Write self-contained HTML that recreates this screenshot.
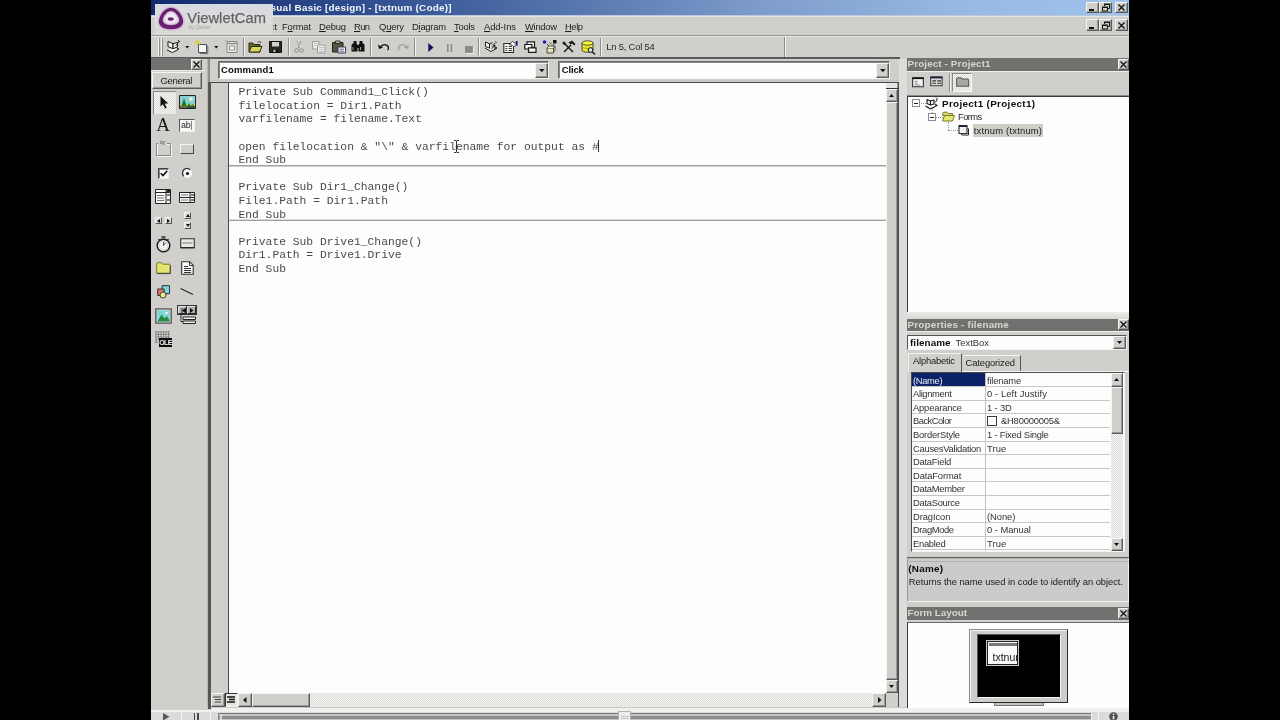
<!DOCTYPE html>
<html lang="en">
<head>
<meta charset="utf-8">
<title>Project1 - Microsoft Visual Basic [design] - [txtnum (Code)]</title>
<style>
*{box-sizing:border-box;margin:0;padding:0}
html,body{width:1280px;height:720px;overflow:hidden;background:#000}
body{position:relative;font-family:"Liberation Sans",sans-serif;font-size:9.4px;line-height:12px;color:#1c1c1c}
.a,.a>*{position:absolute}
.t{white-space:nowrap;line-height:12px;height:12px}
.b{font-weight:bold}
u{text-decoration:underline;text-underline-offset:1px}
.face{background:#d0cfcc}
.btn{background:#d0cfcc;border:1px solid;border-color:#f4f4f0 #5a5a5a #5a5a5a #f4f4f0;box-shadow:inset -1px -1px 0 #9a9a98}
.hdr{background:#717170;color:#d8d6d0;font-weight:bold;font-size:9.9px}
.sep{width:2px;border-left:1px solid #8c8c88;border-right:1px solid #f4f4f0}
.dither{background-color:#e8e8e6;background-image:conic-gradient(#f6f6f4 25%,#dcdbd8 0 50%,#f6f6f4 0 75%,#dcdbd8 0);background-size:2px 2px}
.code{font-family:"Liberation Mono",monospace;font-size:11.33px;line-height:13.6px;height:13.6px;color:#4a4a4a;white-space:pre;letter-spacing:0}
.row{left:912px;width:198px;height:13.6px;border-bottom:1px solid #c9c7c1}
.pn{color:#333}
.pv{color:#333}
svg{position:absolute;overflow:visible}
</style>
</head>
<body>
<div class="a" style="left:0;top:0;width:1280px;height:720px;overflow:hidden;background:#000;will-change:transform">
<!-- application background -->
<div class="face" style="left:151px;top:-6px;width:978px;height:732px"></div>

<!-- title bar -->
<div style="left:151px;top:-6px;width:978px;height:22px;background:linear-gradient(to right,#12296e 0%,#2d4b8c 20%,#5474ac 42%,#7d9bcb 62%,#97b8e2 82%,#9fc3ec 100%)"></div>
<div style="left:151px;top:15px;width:978px;height:2px;background:linear-gradient(#a8b8d4,#f4f4f4)"></div>
<div class="t b" style="left:159.5px;letter-spacing:0.30px;top:1.6px;font-size:9.9px;color:#f4f6fa;">Project1 - Microsoft Visual</div>
<div class="t b" style="left:294.6px;letter-spacing:0.23px;top:1.6px;font-size:9.9px;color:#f4f6fa;">Basic [design] - [txtnum (Code)]</div>
<!-- window buttons -->
<div class="btn" style="left:1086px;top:2px;width:13px;height:11px"></div>
<div style="left:1089px;top:9px;width:5px;height:2px;background:#111"></div>
<div class="btn" style="left:1099px;top:2px;width:13px;height:11px"></div>
<svg style="left:1101px;top:3px" width="9" height="9" viewBox="0 0 9 9"><path d="M3.500 1.500h5v4h-1.500M3.500 1.500v1.500" fill="none" stroke="#111" stroke-width="1"/><path d="M3 1h6" stroke="#111" stroke-width="1"/><path d="M1.500 4.500h5v3.500h-5z" fill="none" stroke="#111" stroke-width="1"/><path d="M1 4h6" stroke="#111" stroke-width="1"/></svg>
<div class="btn" style="left:1115px;top:2px;width:13px;height:11px"></div>
<svg style="left:1118px;top:4px" width="7" height="7" viewBox="0 0 7 7"><path d="M0.5 0.5l6 6M6.5 0.5l-6 6" stroke="#111" stroke-width="1.4"/></svg>

<!-- menu bar -->
<div class="t" style="left:173px;letter-spacing:-0.21px;top:20.8px"><u>F</u>ile</div>
<div class="t" style="left:197px;letter-spacing:-0.22px;top:20.8px"><u>E</u>dit</div>
<div class="t" style="left:222px;letter-spacing:-0.22px;top:20.8px"><u>V</u>iew</div>
<div class="t" style="left:249px;letter-spacing:-0.20px;top:20.8px"><u>P</u>roject</div>
<div class="t" style="left:282px;letter-spacing:-0.14px;top:20.8px">F<u>o</u>rmat</div>
<div class="t" style="left:319px;letter-spacing:-0.16px;top:20.8px"><u>D</u>ebug</div>
<div class="t" style="left:354px;letter-spacing:-0.61px;top:20.8px"><u>R</u>un</div>
<div class="t" style="left:379px;letter-spacing:-0.14px;top:20.8px">Q<u>u</u>ery</div>
<div class="t" style="left:412px;letter-spacing:-0.24px;top:20.8px">D<u>i</u>agram</div>
<div class="t" style="left:454px;letter-spacing:-0.22px;top:20.8px"><u>T</u>ools</div>
<div class="t" style="left:484px;letter-spacing:-0.05px;top:20.8px"><u>A</u>dd-Ins</div>
<div class="t" style="left:525px;letter-spacing:-0.27px;top:20.8px"><u>W</u>indow</div>
<div class="t" style="left:565px;letter-spacing:-0.43px;top:20.8px"><u>H</u>elp</div>
<!-- mdi child buttons -->
<div class="btn" style="left:1086px;top:19px;width:13px;height:12px"></div>
<div style="left:1089px;top:27px;width:5px;height:2px;background:#111"></div>
<div class="btn" style="left:1099px;top:19px;width:13px;height:12px"></div>
<svg style="left:1101px;top:21px" width="9" height="9" viewBox="0 0 9 9"><path d="M3.500 1.500h5v4h-1.500M3.500 1.500v1.500" fill="none" stroke="#111" stroke-width="1"/><path d="M3 1h6" stroke="#111" stroke-width="1"/><path d="M1.500 4.500h5v3.500h-5z" fill="none" stroke="#111" stroke-width="1"/><path d="M1 4h6" stroke="#111" stroke-width="1"/></svg>
<div class="btn" style="left:1115px;top:19px;width:13px;height:12px"></div>
<svg style="left:1118px;top:22px" width="7" height="7" viewBox="0 0 7 7"><path d="M0.5 0.5l6 6M6.5 0.5l-6 6" stroke="#111" stroke-width="1.4"/></svg>
<!-- menu/toolbar divider -->
<div style="left:151px;top:35px;width:978px;height:1px;background:#9a9894"></div>
<div style="left:151px;top:36px;width:978px;height:1px;background:#e8e6e2"></div>

<!-- toolbar -->
<div style="left:158px;top:38px;width:2px;height:18px;border-left:1px solid #f4f4f0;border-right:1px solid #8c8c88"></div>
<div style="left:161px;top:38px;width:2px;height:18px;border-left:1px solid #f4f4f0;border-right:1px solid #8c8c88"></div>
<div class="sep" style="left:243px;top:38px;height:18px"></div>
<div class="sep" style="left:288px;top:38px;height:18px"></div>
<div class="sep" style="left:370px;top:38px;height:18px"></div>
<div class="sep" style="left:414px;top:38px;height:18px"></div>
<div class="sep" style="left:478px;top:38px;height:18px"></div>
<div class="sep" style="left:600px;top:38px;height:18px"></div>
<div class="sep" style="left:784px;top:37px;height:21px"></div>
<div class="t" style="left:606.3px;letter-spacing:-0.19px;top:41px;color:#2a2a2a">Ln 5, Col 54</div>
<!-- toolbar bottom edge -->
<div style="left:151px;top:57px;width:749px;height:2px;background:#5a5a5a"></div>
<!-- toolbar icons -->
<svg style="left:166px;top:39px" width="16" height="16" viewBox="0 0 16 16"><path d="M1 11l5.500 2.500 6.500-3.500-3-1.500" fill="#f4f4f0" stroke="#1a1a1a" stroke-width="1" stroke-linejoin="round"/><path d="M2 2.500l5 2.200v5l-5-2.200z" fill="#f8f8f8" stroke="#1a1a1a" stroke-width="1" stroke-linejoin="round"/><path d="M7 4.700l4.500-1.200v4.500l-4.500 1.700z" fill="#e8e8e4" stroke="#1a1a1a" stroke-width="1" stroke-linejoin="round"/><path d="M10 6.500l3.500-4.500M12 1l2 2" stroke="#1a1a1a" stroke-width="1" fill="none"/></svg>
<svg style="left:185px;top:45.800px" width="4.500" height="2.500" viewBox="0 0 5 3"><path d="M0 0h5l-2.500 3z" fill="#111"/></svg>
<svg style="left:194px;top:39px" width="16" height="16" viewBox="0 0 16 16"><path d="M5.500 7.500l1.500 1v6h6.500l1 .800h-7.500l-1.500-1z" fill="#8a8a8a"/><path d="M4.500 5.500h8v8h-8z" fill="#f6f6f6" stroke="#3a3a4a" stroke-width=".9"/><path d="M12.500 6.500l1.300.800v7h-7.300l-1.200-.800" fill="none" stroke="#555" stroke-width=".8"/><path d="M3.500 .500v6M.500 3.500h6M1.400 1.400l4.200 4.200M5.600 1.400l-4.200 4.200" stroke="#d6d62a" stroke-width=".9"/></svg>
<svg style="left:214px;top:45.800px" width="4.500" height="2.500" viewBox="0 0 5 3"><path d="M0 0h5l-2.500 3z" fill="#111"/></svg>
<svg style="left:225px;top:40px" width="13" height="13" viewBox="0 0 13 13"><path d="M2 1.5h10v11h-10z" fill="#e4e4e0" stroke="#8a8a8a" stroke-width="1"/><path d="M2 3.5h10" stroke="#8a8a8a" stroke-width="1.4"/><path d="M4.5 6h5v4h-5z" fill="#f4f4f4" stroke="#8a8a8a" stroke-width=".9"/><path d="M0 1h1.5" stroke="#8a8a8a" stroke-width="1"/></svg>
<svg style="left:248px;top:40px" width="15" height="13" viewBox="0 0 15 13"><path d="M1 3h4l1 1.5h6v7.5h-11z" fill="#6a6a20" stroke="#2a2a10" stroke-width="1"/><path d="M1 12l2.5-5.5h10.5l-2.5 5.5z" fill="#d8d860" stroke="#2a2a10" stroke-width="1"/><path d="M9.5 2.5c1.5-1.5 3-1 3.5.5" fill="none" stroke="#222" stroke-width=".9"/></svg>
<svg style="left:269px;top:41px" width="13" height="12" viewBox="0 0 13 12"><path d="M.5.5h12v11h-12z" fill="#2c2c24" stroke="#111" stroke-width="1"/><path d="M3 1h7v4.5h-7z" fill="#d0d0cc"/><path d="M3.5 8h6v3.500h-6z" fill="#111"/><path d="M4.500 8.600h2v2.400h-2z" fill="#c8c8c4"/></svg>
<svg style="left:294px;top:41px" width="10" height="12" viewBox="0 0 10 12"><path d="M3 0l3 7.500M7 0l-3 7.500" stroke="#8c8c8c" stroke-width="1" fill="none"/><circle cx="2.500" cy="9.500" r="1.800" fill="none" stroke="#8c8c8c" stroke-width="1"/><circle cx="7.500" cy="9.500" r="1.800" fill="none" stroke="#8c8c8c" stroke-width="1"/><path d="M3.800 .500l3 7.500" stroke="#f4f4f4" stroke-width=".6"/></svg>
<svg style="left:312px;top:40.500px" width="15" height="13" viewBox="0 0 15 13"><path d="M.500.500h6.500v7.500h-6.500z" fill="#ecece8" stroke="#9a9a98" stroke-width="1"/><path d="M5.500 4h7.500v8h-7.500z" fill="#f0f0ec" stroke="#9a9a98" stroke-width="1"/><path d="M2 2.500h3.500M2 4.500h2M7 6.500h4.500M7 8.500h4.500M7 10.500h4.500" stroke="#b0b0ac" stroke-width=".8"/></svg>
<svg style="left:332px;top:40px" width="14" height="14" viewBox="0 0 14 14"><path d="M.500 2.500h10.500v9.500h-10.500z" fill="#56563c" stroke="#22221a" stroke-width="1"/><path d="M3.500 1h4.500v2.500h-4.500z" fill="#b4b4ac" stroke="#22221a" stroke-width=".9"/><path d="M6 7h7.500v6h-7.500z" fill="#f4f4f4" stroke="#3a3a5a" stroke-width="1"/><path d="M7.500 9.200h4.500M7.500 11.200h4.500" stroke="#55557a" stroke-width=".9"/></svg>
<svg style="left:351px;top:40px" width="14" height="13" viewBox="0 0 14 13"><path d="M2.500 1h3v4h-3zM8.500 1h3v4h-3z" fill="#111"/><path d="M.500 5.500c0-1.500 1-2 2.500-2h2c1 0 1.500.800 1.500 2v6h-6zM7.500 5.500c0-1.500 1-2 2.500-2h2c1 0 1.500.800 1.500 2v6h-6z" fill="#111"/><path d="M5.500 5h3v3h-3z" fill="#111"/><path d="M2 7v3M9.500 7v3" stroke="#bbb" stroke-width=".9"/></svg>
<svg style="left:377.500px;top:42.500px" width="12" height="8" viewBox="0 0 12 8"><path d="M3 3.500c2.500-3 7.500-2 7.500 1.500 0 .800-.400 1.600-1 2.200" fill="none" stroke="#111" stroke-width="1.200"/><path d="M0 1.500l1 4.500 4-1.500z" fill="#111"/></svg>
<svg style="left:397px;top:42.500px" width="12" height="8" viewBox="0 0 12 8"><path d="M9 3.500c-2.500-3-7.500-2-7.500 1.500 0 .800.400 1.600 1 2.200" fill="none" stroke="#a0a09c" stroke-width="1.200"/><path d="M12 1.500l-1 4.500-4-1.500z" fill="#a0a09c"/></svg>
<svg style="left:428px;top:42.500px" width="6" height="9" viewBox="0 0 6 9"><path d="M.300 0l5.200 4.500-5.200 4.500z" fill="#101060"/></svg>
<svg style="left:446px;top:44px" width="7" height="8" viewBox="0 0 7 8"><path d="M1 0h1.600v8h-1.600zM4.600 0h1.600v8h-1.600z" fill="#8a8a8a"/></svg>
<div style="left:465px;top:46px;width:8px;height:7px;background:#8c8c8c;box-shadow:1px 1px 0 #f0f0ec"></div>
<svg style="left:484px;top:40px" width="14" height="14" viewBox="0 0 14 14"><path d="M1 8l6 3.500 6-3.500-2.500-1.500" fill="#f4f4f0" stroke="#1a1a1a" stroke-width="1" stroke-linejoin="round"/><path d="M1.500 2l4 1.800v4.400l-4-1.800z" fill="#f8f8f8" stroke="#1a1a1a" stroke-width="1" stroke-linejoin="round"/><path d="M5.500 3.800l3-1M7.500 9l3.500-6M9 4.500l3 4M11.500 1.500l1 1.500M9.500 7.500l2 1.500" stroke="#1a1a1a" stroke-width=".9" fill="none"/><circle cx="10.500" cy="6" r=".900" fill="#1a1a1a"/></svg>
<svg style="left:503px;top:40px" width="15" height="14" viewBox="0 0 15 14"><path d="M.800 3.500h9.700v9h-9.700z" fill="#f6f6f4" stroke="#2a2a2a" stroke-width="1.100"/><path d="M2.300 6.500h2M5.500 6.500h3.500M2.300 8.500h2M5.500 8.500h3.500M2.300 10.500h2M5.500 10.500h3.500" stroke="#333" stroke-width=".9"/><path d="M6 4.500l3.500-3 2 1.300 1.500-.800v3.500l-2.500 1.200-1.500-1.500z" fill="#f4f4f0" stroke="#2a2a2a" stroke-width=".9" stroke-linejoin="round"/><path d="M13 1h1.600v4.500h-1.600z" fill="#1a1a7a"/></svg>
<svg style="left:524px;top:41px" width="13" height="12" viewBox="0 0 13 12"><path d="M3 .800h7.500v5.500h-7.500z" fill="#f4f4f4" stroke="#1a1a1a" stroke-width="1.200"/><path d="M.800 3.500h7v4.500h-7z" fill="#f4f4f4" stroke="#1a1a1a" stroke-width="1.200"/><path d="M4.500 6.800h7.500v4.500h-7.500z" fill="#f4f4f4" stroke="#1a1a1a" stroke-width="1.200"/></svg>
<svg style="left:542px;top:39px" width="15" height="15" viewBox="0 0 15 15"><circle cx="2.500" cy="3" r="1.800" fill="#2222aa"/><path d="M11 1h3.500v3.500h-3.500z" fill="#111"/><path d="M7.500 3.500l2 1.500M5 5l3 3M12 5l-2 3" stroke="#333" stroke-width=".9"/><path d="M5 9h6.500v5h-6.500z" fill="#e4e4a8" stroke="#444" stroke-width="1"/><path d="M5 9l1.500-2h6.500l-1.500 2M13 7v4.500l-1.500 2" fill="#f4f4d0" stroke="#444" stroke-width=".9"/></svg>
<svg style="left:562px;top:40px" width="14" height="13" viewBox="0 0 14 13"><path d="M2.500 3.500l8.500 8.500" stroke="#1a1a1a" stroke-width="1.500"/><path d="M1 1.500l2 .500 1 2-1.500 1-2-1z" fill="#1a1a1a"/><path d="M2 12l7-7" stroke="#1a1a1a" stroke-width="1.400"/><path d="M6.500 2.500l3.500-2 3.500 3.500-1.200 1.500-2.300-2-1.500 1z" fill="#1a1a1a"/></svg>
<svg style="left:581px;top:40px" width="15" height="15" viewBox="0 0 15 15"><path d="M1 3v7c0 3 11 3 11 0v-7" fill="#ecec28" stroke="#444" stroke-width="1"/><ellipse cx="6.500" cy="3" rx="5.500" ry="2.200" fill="#f4f440" stroke="#444" stroke-width="1"/><path d="M1 6.500c0 2.500 11 2.500 11 0" fill="none" stroke="#8a8a20" stroke-width=".8"/><circle cx="9.500" cy="10" r="2.300" fill="#e8e8e0" stroke="#111" stroke-width="1"/><path d="M11.200 11.800l2.800 2.700" stroke="#111" stroke-width="1.500"/></svg>
<!-- toolbox -->
<div class="hdr" style="left:151px;top:57.500px;width:41px;height:12px"></div>
<div class="btn" style="left:191px;top:58.500px;width:11px;height:11px"></div>
<svg style="left:193px;top:60.500px" width="7" height="7" viewBox="0 0 7 7"><path d="M0.500 0.500l6 6M6.500 0.500l-6 6" stroke="#111" stroke-width="1.300"/></svg>
<div style="left:151px;top:70px;width:54px;height:1px;background:#ecebe7"></div>
<div class="btn" style="left:152px;top:72px;width:50px;height:17px"></div>
<div class="t" style="left:160.5px;letter-spacing:-0.36px;top:74.6px;font-size:9.6px">General</div>
<!-- toolbox / code window divider -->
<div style="left:208px;top:59px;width:1.500px;height:23px;background:#8e8e8c"></div><div style="left:208px;top:82px;width:3px;height:627px;background:#555554"></div>
<div style="left:207px;top:59px;width:1px;height:648px;background:#b8b6b0"></div>

<!-- pointer (selected) -->
<div class="dither" style="left:153px;top:91px;width:23px;height:23px;border-left:1px solid #8c8c8c;border-top:1px solid #8c8c8c"></div>
<svg style="left:160px;top:96px" width="9" height="13" viewBox="0 0 9 13"><path d="M.500 0v10.500l2.500-2.300 2 4.300 1.700-.8-2-4.200h3.500z" fill="#111"/></svg>
<!-- picturebox -->
<svg style="left:179px;top:95px" width="17" height="14" viewBox="0 0 17 14"><path d="M.500.500h16v13h-16z" fill="#8ad0d8" stroke="#222" stroke-width="1"/><path d="M1 9h15v4h-15z" fill="#c8c060"/><path d="M2.500 11l2.500-8 2.500 8z" fill="#1c7a30"/><circle cx="12" cy="4" r="1.800" fill="#f4f4c0"/><path d="M8 11l2-3 2 3 1.500-2 2 2.500v1.500h-7.500z" fill="#2a8a3a"/><path d="M1 12h15" stroke="#333" stroke-width="1.200"/></svg>
<!-- label A -->
<div class="t" style="left:154px;top:115px;width:18px;height:20px;line-height:20px;text-align:center;font-family:'Liberation Serif',serif;font-size:19px;color:#1a1a1a">A</div>
<!-- textbox -->
<div style="left:179px;top:119px;width:16px;height:13px;background:#f8f8f8;border:1px solid;border-color:#555 #eee #eee #555"></div>
<div class="t" style="left:181px;top:119px;font-size:9px;color:#222;letter-spacing:-.3px">ab<span style="color:#555">|</span></div>
<!-- frame -->
<div style="left:156px;top:143px;width:15px;height:13px;border:1px solid #8a8a8a;box-shadow:1px 1px 0 #f4f4f4, inset 1px 1px 0 #f4f4f4"></div>
<div class="t" style="left:158px;top:139px;width:9px;height:6px;line-height:6px;font-size:5px;background:#d0cfcc;color:#333;text-align:center">xy</div>
<!-- command button -->
<div style="left:180px;top:144px;width:14px;height:10px;background:#d0cfcc;border:1px solid;border-color:#f6f6f6 #444 #444 #f6f6f6"></div>
<!-- checkbox -->
<div style="left:158px;top:168px;width:11px;height:11px;background:#f8f8f8;border:1px solid;border-color:#444 #eee #eee #444;box-shadow:inset 1px 1px 0 #888"></div>
<svg style="left:160px;top:170px" width="8" height="7" viewBox="0 0 8 7"><path d="M.700 3.200l2.300 2.300 4.300-4.800" fill="none" stroke="#111" stroke-width="1.600"/></svg>
<!-- option button -->
<svg style="left:182px;top:168px" width="11" height="11" viewBox="0 0 11 11"><circle cx="5.500" cy="5.500" r="4.500" fill="#f8f8f8"/><path d="M1.800 8.200a4.500 4.500 0 0 1 6.400-6.400" fill="none" stroke="#333" stroke-width="1.300"/><circle cx="5.500" cy="5.500" r="1.600" fill="#111"/></svg>
<!-- combobox -->
<svg style="left:155px;top:189px" width="16" height="15" viewBox="0 0 16 15"><path d="M.500.500h15v14h-15z" fill="#f8f8f8" stroke="#222" stroke-width="1"/><path d="M.500 3.500h15M11 .500v14" stroke="#222" stroke-width="1"/><path d="M11.500 1h4v2.500h-4z" fill="#222"/><path d="M12 6h3M12 11h3" stroke="#555" stroke-width="1.600"/><path d="M2 6.500h7M2 9h7M2 11.500h7" stroke="#666" stroke-width=".9"/></svg>
<!-- listbox -->
<svg style="left:179px;top:192px" width="16" height="11" viewBox="0 0 16 11"><path d="M.500.500h15v10h-15z" fill="#f8f8f8" stroke="#222" stroke-width="1"/><path d="M11 .500v10M.500 5.500h15" stroke="#222" stroke-width="1"/><path d="M12 3h3M12 8h3" stroke="#555" stroke-width="1.600"/><path d="M2 3h7M2 8h7" stroke="#666" stroke-width=".9"/></svg>
<!-- hscroll -->
<div style="left:155px;top:217px;width:7px;height:7px;background:#dcdcd8;border:1px solid;border-color:#f4f4f4 #555 #555 #f4f4f4"></div>
<svg style="left:157px;top:219px" width="3" height="4" viewBox="0 0 3 4"><path d="M3 0v4l-3-2z" fill="#111"/></svg>
<div style="left:165px;top:217px;width:7px;height:7px;background:#dcdcd8;border:1px solid;border-color:#f4f4f4 #555 #555 #f4f4f4"></div>
<svg style="left:167px;top:219px" width="3" height="4" viewBox="0 0 3 4"><path d="M0 0v4l3-2z" fill="#111"/></svg>
<!-- vscroll -->
<div style="left:184px;top:212px;width:7px;height:7px;background:#dcdcd8;border:1px solid;border-color:#f4f4f4 #555 #555 #f4f4f4"></div>
<svg style="left:185.500px;top:214px" width="4" height="3" viewBox="0 0 4 3"><path d="M0 3h4l-2-3z" fill="#111"/></svg>
<div style="left:184px;top:222px;width:7px;height:7px;background:#dcdcd8;border:1px solid;border-color:#f4f4f4 #555 #555 #f4f4f4"></div>
<svg style="left:185.500px;top:224px" width="4" height="3" viewBox="0 0 4 3"><path d="M0 0h4l-2 3z" fill="#111"/></svg>
<!-- timer -->
<svg style="left:156px;top:235px" width="15" height="18" viewBox="0 0 15 18"><circle cx="7.500" cy="10.500" r="6.300" fill="#f4f4f4" stroke="#1a1a1a" stroke-width="1.500"/><path d="M5.500 1h4v2.500h-4z" fill="#555"/><path d="M7.500 10.500l2.500-3M7.500 10.500v-4" stroke="#444" stroke-width=".9"/><path d="M2.500 4l1.500 1.500M12.500 4l-1.500 1.500" stroke="#222" stroke-width="1.200"/><circle cx="7.500" cy="10.500" r="4.300" fill="none" stroke="#999" stroke-width=".8" stroke-dasharray="1 1.200"/></svg>
<!-- drive list -->
<svg style="left:180px;top:238px" width="15" height="11" viewBox="0 0 15 11"><path d="M.700.700h13.600v9h-13.600z" fill="#e8e8e4" stroke="#333" stroke-width="1.100"/><path d="M2.500 5h10" stroke="#777" stroke-width="1"/><path d="M1 9.700h13.500" stroke="#222" stroke-width="1.200"/></svg>
<!-- dir list -->
<svg style="left:156px;top:262px" width="15" height="13" viewBox="0 0 15 13"><path d="M.700 2c0-.8.500-1.300 1.300-1.300h3.500l1.200 1.500h6.500c.700 0 1.100.500 1.100 1.200v7.800h-13.600z" fill="#e4e470" stroke="#77772a" stroke-width="1"/><path d="M1 11.600h13.500M14.300 3.500v8" stroke="#444" stroke-width="1"/></svg>
<!-- file list -->
<svg style="left:181px;top:261px" width="13" height="14" viewBox="0 0 13 14"><path d="M.700.700h8l3.500 3.500v9h-11.500z" fill="#f8f8f8" stroke="#333" stroke-width="1.100"/><path d="M8.500.700v3.800h3.700" fill="none" stroke="#333" stroke-width="1"/><path d="M3 5.500h4M3 7.500h7M3 9.500h7M3 11.500h7" stroke="#333" stroke-width="1"/></svg>
<!-- shape -->
<svg style="left:157px;top:285px" width="14" height="14" viewBox="0 0 14 14"><path d="M5 .700h7.500v8h-7.500z" fill="#78d8e0" stroke="#333" stroke-width="1"/><path d="M.700 4h6.500v6.500h-6.500z" fill="#e07868" stroke="#333" stroke-width="1"/><circle cx="6" cy="10" r="3" fill="#f0e878" stroke="#444" stroke-width="1"/></svg>
<!-- line -->
<svg style="left:180px;top:287px" width="14" height="9" viewBox="0 0 14 9"><path d="M.500 1.500l12.500 6" stroke="#222" stroke-width="1.100"/></svg>
<!-- image -->
<svg style="left:155px;top:308px" width="17" height="16" viewBox="0 0 17 16"><path d="M.800.800h15.400v14.400h-15.400z" fill="#d0d0cc" stroke="#555" stroke-width="1.300"/><path d="M2.500 2.500h12v11h-12z" fill="#7ad8d8"/><path d="M2.500 13.500l4-7 3 4 2-2.500 3 4v1.500z" fill="#2a8a44"/><circle cx="11.500" cy="5" r="1.300" fill="#f8f8f8"/></svg>
<!-- data -->
<div style="left:178px;top:306px;width:9px;height:8px;background:#bcbcba;border:1px solid;border-color:#e4e4e4 #222 #222 #e4e4e4;outline:1px solid #333"></div>
<svg style="left:180.500px;top:308px" width="5" height="5" viewBox="0 0 5 5"><path d="M1 0v5M5 0v5l-3.500-2.500z" stroke="#111" stroke-width=".8" fill="#111"/></svg>
<div style="left:187px;top:306px;width:9px;height:8px;background:#b0b0ae;border:1px solid;border-color:#e4e4e4 #222 #222 #e4e4e4;outline:1px solid #333"></div>
<svg style="left:189.500px;top:308px" width="5" height="5" viewBox="0 0 5 5"><path d="M0 0v5l3.500-2.500z" fill="#111"/></svg>
<svg style="left:180px;top:315px" width="16" height="10" viewBox="0 0 16 10"><path d="M1 0v6.500h2M3 2h12.500v2.500h-12.500zM3 6h12.500v2.500h-12.500z" fill="#f4f4f4" stroke="#222" stroke-width="1"/></svg>
<!-- OLE -->
<svg style="left:155px;top:331px" width="15" height="13" viewBox="0 0 15 13"><path d="M.500 1h14.500M.500 3.500h14.500M.500 6h14.500M1 .500v12M3.500 .500v7M6 .500v7M8.500 .500v7M11 .500v7M13.500 .500v7M.500 8.500h4M.500 11h4" stroke="#3a3a3a" stroke-width=".8" stroke-dasharray="1 1"/></svg>
<div class="t b" style="left:159px;top:338px;width:13px;height:9px;line-height:9px;background:#0a0a0a;color:#f4f4f4;font-size:7px;text-align:center;letter-spacing:-.6px;overflow:hidden">OLE</div>
<!-- code window frame -->
<div style="left:211px;top:59px;width:689px;height:2px;background:#d0cfcc"></div>
<div style="left:899px;top:59px;width:7.500px;height:649.500px;background:#dcdcda"></div>

<!-- object combo -->
<div style="left:218px;top:61px;width:331px;height:18px;background:#fdfdfd;border:1px solid;border-color:#666 #f4f4f0 #f4f4f0 #666;box-shadow:inset 1px 1px 0 #8a8a8a"></div>
<div class="t b" style="left:221px;letter-spacing:0.15px;top:64.2px;font-size:9.5px;color:#0c0c0c">Command1</div>
<div class="btn" style="left:535px;top:63px;width:13px;height:15px"></div>
<svg style="left:538.7px;top:68.8px" width="5.600" height="3.400" viewBox="0 0 7 4"><path d="M0 0h7l-3.500 4z" fill="#111"/></svg>
<!-- proc combo -->
<div style="left:558px;top:61px;width:332px;height:18px;background:#fdfdfd;border:1px solid;border-color:#666 #f4f4f0 #f4f4f0 #666;box-shadow:inset 1px 1px 0 #8a8a8a"></div>
<div class="t b" style="left:561.8px;letter-spacing:-0.18px;top:64.2px;font-size:9.5px;color:#0c0c0c">Click</div>
<div class="btn" style="left:876px;top:63px;width:13px;height:15px"></div>
<svg style="left:879.7px;top:68.8px" width="5.600" height="3.400" viewBox="0 0 7 4"><path d="M0 0h7l-3.500 4z" fill="#111"/></svg>
<!-- code area -->
<div style="left:211px;top:80px;width:688px;height:1px;background:#c4c4c2"></div>
<div style="left:211px;top:81.600px;width:688px;height:1px;background:#484848"></div>
<div style="left:211px;top:82.500px;width:18px;height:610.500px;background:#d0cfcc"></div>
<div style="left:228px;top:82.500px;width:1px;height:610.500px;background:#484848"></div>
<div style="left:229px;top:82.500px;width:656.500px;height:610.500px;background:#fdfdfd"></div>
<div style="left:229px;top:165px;width:656.500px;height:1px;background:#a0a0a0;box-shadow:0 1px 0 #cfcfcf"></div>
<div style="left:229px;top:220px;width:656.500px;height:1px;background:#a0a0a0;box-shadow:0 -1px 0 #dcdcdc"></div>
<div class="code" style="left:238.4px;top:86.1px">Private Sub Command1_Click()</div>
<div class="code" style="left:238.4px;top:99.7px">filelocation = Dir1.Path</div>
<div class="code" style="left:238.4px;top:113.3px">varfilename = filename.Text</div>
<div class="code" style="left:238.4px;top:140.5px">open filelocation &amp; "\" &amp; varfilename for output as #</div>
<div class="code" style="left:238.4px;top:154.1px">End Sub</div>
<div class="code" style="left:238.4px;top:181.3px">Private Sub Dir1_Change()</div>
<div class="code" style="left:238.4px;top:194.9px">File1.Path = Dir1.Path</div>
<div class="code" style="left:238.4px;top:208.5px">End Sub</div>
<div class="code" style="left:238.4px;top:235.7px">Private Sub Drive1_Change()</div>
<div class="code" style="left:238.4px;top:249.3px">Dir1.Path = Drive1.Drive</div>
<div class="code" style="left:238.4px;top:262.9px">End Sub</div>
<!-- caret + I-beam -->
<div style="left:598px;top:140px;width:1px;height:12px;background:#333"></div>
<svg style="left:453px;top:140px" width="7" height="13" viewBox="0 0 7 13"><path d="M1 .500h2l.500.500.500-.500h2M3.500 1v11M1 12.500h2l.500-.500.500.500h2M2.500 7h2" fill="none" stroke="#333" stroke-width="1"/></svg>
<!-- vertical scrollbar -->
<div class="dither" style="left:885.500px;top:82.500px;width:12.500px;height:610.500px"></div>
<div style="left:898px;top:82px;width:1px;height:625px;background:#4a4a4a"></div>
<div style="left:885.500px;top:83px;width:12.500px;height:5px;background:#e6e6e4;border-right:1px solid #999"></div>
<div style="left:885.500px;top:88px;width:12.500px;height:1px;background:#333"></div>
<div class="btn" style="left:885.500px;top:89px;width:12.500px;height:12.500px"></div>
<svg style="left:889.0px;top:93.8px" width="5" height="3" viewBox="0 0 6 3.500"><path d="M0 3.500h6l-3-3.500z" fill="#111"/></svg>
<div class="btn" style="left:885.500px;top:101.500px;width:12.500px;height:578px"></div>
<div class="btn" style="left:885.500px;top:679.500px;width:12.500px;height:13.500px"></div>
<svg style="left:889.0px;top:685.3px" width="5" height="3" viewBox="0 0 6 3.500"><path d="M0 0h6l-3 3.500z" fill="#111"/></svg>
<!-- horizontal scrollbar -->
<div class="dither" style="left:211px;top:693px;width:674.500px;height:14px"></div>
<div class="btn" style="left:211px;top:693px;width:13.500px;height:14px"></div>
<svg style="left:213px;top:696px" width="9" height="8" viewBox="0 0 9 8"><path d="M0 1h8M2 3.500h6M2 6h6" stroke="#444" stroke-width="1"/></svg>
<div style="left:224.500px;top:693px;width:13.500px;height:14px;background:#e8e6e2;border:1px solid;border-color:#333 #f4f4f0 #f4f4f0 #333"></div>
<svg style="left:227px;top:696px" width="9" height="8" viewBox="0 0 9 8"><path d="M0 1h8M2 3.500h6M0 6h8" stroke="#111" stroke-width="1.300"/></svg>
<div class="btn" style="left:238px;top:693px;width:13.500px;height:14px"></div>
<svg style="left:242.500px;top:697px" width="3.500" height="6" viewBox="0 0 3.500 6"><path d="M3.500 0v6l-3.500-3z" fill="#111"/></svg>
<div class="btn" style="left:251.500px;top:693px;width:58px;height:14px"></div>
<div class="btn" style="left:872px;top:693px;width:13.500px;height:14px"></div>
<svg style="left:877.500px;top:697px" width="3.500" height="6" viewBox="0 0 3.500 6"><path d="M0 0v6l3.500-3z" fill="#111"/></svg>
<div class="face" style="left:885.500px;top:693px;width:12.500px;height:14px"></div>
<!-- project explorer -->
<div class="hdr" style="left:906.500px;top:58px;width:222.500px;height:12.500px"></div>
<div class="t hdr" style="left:907.5px;letter-spacing:0.11px;top:58.3px;background:none">Project - Project1</div>
<div class="btn" style="left:1117.500px;top:58.500px;width:11px;height:11px"></div>
<svg style="left:1120px;top:60.500px" width="7" height="7" viewBox="0 0 7 7"><path d="M0.500 0.500l6 6M6.500 0.500l-6 6" stroke="#111" stroke-width="1.300"/></svg>
<div style="left:906.500px;top:70.500px;width:222.500px;height:1px;background:#f0efeb"></div>
<svg style="left:912px;top:76.500px" width="12" height="10.500" viewBox="0 0 13 11"><path d="M.700.700h11.600v9.600h-11.600z" fill="#f4f4f4" stroke="#333" stroke-width="1.200"/><path d="M.500 1.200h12" stroke="#111" stroke-width="1.800"/><path d="M3 4.500h3M3 6.500h3M3 8.500h6" stroke="#777" stroke-width=".9"/></svg>
<svg style="left:930.300px;top:76.300px" width="12.800" height="10.800" viewBox="0 0 14 11"><path d="M.700.700h12.600v9.600h-12.600z" fill="#d8d8d4" stroke="#444" stroke-width="1.200"/><path d="M.500 1.200h13" stroke="#1a1a3a" stroke-width="2"/><path d="M2.500 5h4M8 5h4M2.500 7.500h4M8 7.500h4" stroke="#333" stroke-width="1.300"/></svg>
<div class="sep" style="left:949px;top:73px;height:19px"></div>
<div class="dither" style="left:952px;top:73px;width:20px;height:19px;border:1px solid;border-color:#8a8a8a #f8f8f8 #f8f8f8 #8a8a8a"></div>
<svg style="left:956px;top:77px" width="13" height="10.300" viewBox="0 0 14 11"><path d="M.700 2c0-.800.500-1.300 1.300-1.300h3.200l1.300 1.500h6c.700 0 1.100.500 1.100 1.200v6.600h-12.900z" fill="#a8a8a4" stroke="#555" stroke-width="1.100"/></svg>
<div style="left:906.500px;top:94.500px;width:222.500px;height:1px;background:#8a8a8a"></div>
<div style="left:906.500px;top:95.500px;width:222.500px;height:216px;background:#fdfdfd;border-left:1.500px solid #3a3a3a;border-top:1px solid #3a3a3a"></div>
<div style="left:906.500px;top:311.500px;width:222.500px;height:7px;background:linear-gradient(#ecece9,#d6d6d3)"></div>
<!-- tree -->
<div style="left:918px;top:103px;width:8px;height:0;border-top:1px dotted #9a9a9a"></div>
<div style="left:931.500px;top:108px;width:0;height:9px;border-left:1px dotted #9a9a9a"></div>
<div style="left:935px;top:117px;width:8px;height:0;border-top:1px dotted #9a9a9a"></div>
<div style="left:947.500px;top:122px;width:0;height:8px;border-left:1px dotted #9a9a9a"></div>
<div style="left:947.500px;top:130px;width:10px;height:0;border-top:1px dotted #9a9a9a"></div>
<div style="left:912px;top:99px;width:8px;height:8px;background:#fdfdfd;border:1px solid #8c8c8c"></div>
<div style="left:914px;top:102.500px;width:4px;height:1px;background:#222"></div>
<div style="left:928px;top:113px;width:8px;height:8px;background:#fdfdfd;border:1px solid #8c8c8c"></div>
<div style="left:930px;top:116.500px;width:4px;height:1px;background:#222"></div>
<svg style="left:925px;top:97px" width="14" height="13" viewBox="0 0 14 13"><path d="M2 2.500l3.500 1.500v4l-3.500-1.500zM5.500 4l3.500-1v4l-3.500 1M.500 9l5 3 6.500-3.500-2-1.500" fill="#f4f4f0" stroke="#1a1a1a" stroke-width="1.100" stroke-linejoin="round"/><path d="M9.500 5.500c1.500-.500 2.500-2 2.500-3.500M11 .500l1.500 1.500" stroke="#1a1a1a" stroke-width="1" fill="none"/></svg>
<div class="t b" style="left:942px;letter-spacing:0.32px;top:97.5px;font-size:9.9px;color:#0c0c0c">Project1 (Project1)</div>
<svg style="left:942px;top:111px" width="13" height="11" viewBox="0 0 13 11"><path d="M.700 2.500c0-.800.500-1.300 1.300-1.300h3l1.200 1.300h4.300v2h-9.800z" fill="#dcdc70" stroke="#77772a" stroke-width="1"/><path d="M.700 10l1.800-5.500h10l-2 5.500z" fill="#e8e878" stroke="#77772a" stroke-width="1"/></svg>
<div class="t" style="left:958px;letter-spacing:-0.57px;top:111px;color:#2a2a2a">Forms</div>
<svg style="left:958px;top:124px" width="12" height="12" viewBox="0 0 12 12"><path d="M1 1.500h8v8h-8z" fill="#f4f4f4" stroke="#2a3a3a" stroke-width="1.200"/><path d="M1 2h8" stroke="#1a2a3a" stroke-width="2"/><path d="M9.500 4l1 1v6h-6.500l-1-1" fill="none" stroke="#222" stroke-width="1"/></svg>
<div style="left:973px;top:124px;width:70px;height:13px;background:#cfcdc8"></div>
<div class="t" style="left:973.8px;letter-spacing:0.22px;top:124.5px;color:#1a1a1a">txtnum (txtnum)</div>

<!-- properties window -->
<div class="hdr" style="left:906.500px;top:318.500px;width:222.500px;height:12.500px"></div>
<div class="t hdr" style="left:907.5px;letter-spacing:0.18px;top:318.8px;background:none">Properties - filename</div>
<div class="btn" style="left:1117.500px;top:319px;width:11px;height:11px"></div>
<svg style="left:1120px;top:321px" width="7" height="7" viewBox="0 0 7 7"><path d="M0.500 0.500l6 6M6.500 0.500l-6 6" stroke="#111" stroke-width="1.300"/></svg>
<div style="left:906.500px;top:331px;width:222.500px;height:1px;background:#f0efeb"></div>
<div style="left:906.500px;top:334.500px;width:220px;height:15.500px;background:#fdfdfd;border:1px solid;border-color:#555 #f4f4f0 #f4f4f0 #555"></div>
<div class="t b" style="left:910px;letter-spacing:0.07px;top:336.5px;font-size:9.9px;color:#0c0c0c">filename</div><div class="t" style="left:955.6px;letter-spacing:0.01px;top:336.5px;color:#333">TextBox</div>
<div class="btn" style="left:1113px;top:336px;width:12.500px;height:13px"></div>
<svg style="left:1117.0px;top:341.3px" width="5" height="3" viewBox="0 0 6 3.500"><path d="M0 0h6l-3 3.500z" fill="#111"/></svg>
<!-- tabs -->
<div style="left:908px;top:352.500px;width:54px;height:19px;background:#d0cfcc;border-left:1px solid #f4f4f0;border-top:1px solid #f4f4f0;border-right:1.500px solid #555"></div>
<div class="t" style="left:913px;letter-spacing:-0.20px;top:355px;color:#1a1a1a">Alphabetic</div>
<div style="left:962.500px;top:354.500px;width:58px;height:16px;background:#d0cfcc;border-top:1px solid #f4f4f0;border-right:1.500px solid #555"></div>
<div class="t" style="left:965.6px;letter-spacing:-0.12px;top:356.5px;color:#1a1a1a">Categorized</div>
<div style="left:962px;top:370.500px;width:167px;height:1px;background:#f4f4f0"></div>
<!-- grid -->
<div style="left:910.500px;top:372px;width:214px;height:180px;background:#fdfdfd;border:1px solid;border-color:#4a4a4a #f4f4f0 #f4f4f0 #4a4a4a"></div>
<div style="left:984.500px;top:373px;width:1px;height:178px;background:#c4c2bc"></div>
<div style="left:912px;top:373px;width:72.500px;height:13.500px;background:#0c2268"></div>
<div class="row" style="top:373.6px"></div>
<div class="row" style="top:387.2px"></div>
<div class="row" style="top:400.8px"></div>
<div class="row" style="top:414.4px"></div>
<div class="row" style="top:428.0px"></div>
<div class="row" style="top:441.6px"></div>
<div class="row" style="top:455.2px"></div>
<div class="row" style="top:468.8px"></div>
<div class="row" style="top:482.4px"></div>
<div class="row" style="top:496.0px"></div>
<div class="row" style="top:509.6px"></div>
<div class="row" style="top:523.2px"></div>
<div class="row" style="top:536.8px"></div>
<div class="t pn" style="left:913px;letter-spacing:-0.35px;top:374.5px;color:#f0f0f4">(Name)</div><div class="t pv" style="left:987px;letter-spacing:-0.18px;top:374.5px">filename</div>
<div class="t pn" style="left:913px;letter-spacing:-0.35px;top:388.1px">Alignment</div><div class="t pv" style="left:987px;letter-spacing:0.10px;top:388.1px">0 - Left Justify</div>
<div class="t pn" style="left:913px;letter-spacing:-0.18px;top:401.7px">Appearance</div><div class="t pv" style="left:987px;letter-spacing:-0.13px;top:401.7px">1 - 3D</div>
<div class="t pn" style="left:913px;letter-spacing:-0.54px;top:415.3px">BackColor</div><div class="t pv" style="left:1001px;letter-spacing:-0.20px;top:415.3px">&amp;H80000005&amp;</div>
<div style="left:987px;top:415.500px;width:10px;height:10px;background:#fdfdfd;border:1px solid #3a3a3a"></div>
<div class="t pn" style="left:913px;letter-spacing:-0.20px;top:428.9px">BorderStyle</div><div class="t pv" style="left:987px;letter-spacing:-0.22px;top:428.9px">1 - Fixed Single</div>
<div class="t pn" style="left:913px;letter-spacing:-0.27px;top:442.5px">CausesValidation</div><div class="t pv" style="left:987px;letter-spacing:0.12px;top:442.5px">True</div>
<div class="t pn" style="left:913px;letter-spacing:-0.24px;top:456.1px">DataField</div>
<div class="t pn" style="left:913px;letter-spacing:-0.14px;top:469.7px">DataFormat</div>
<div class="t pn" style="left:913px;letter-spacing:-0.27px;top:483.3px">DataMember</div>
<div class="t pn" style="left:913px;letter-spacing:-0.28px;top:496.9px">DataSource</div>
<div class="t pn" style="left:913px;letter-spacing:-0.09px;top:510.5px">DragIcon</div><div class="t pv" style="left:987px;letter-spacing:-0.05px;top:510.5px">(None)</div>
<div class="t pn" style="left:913px;letter-spacing:-0.40px;top:524.1px">DragMode</div><div class="t pv" style="left:987px;letter-spacing:-0.04px;top:524.1px">0 - Manual</div>
<div class="t pn" style="left:913px;letter-spacing:-0.28px;top:537.7px">Enabled</div><div class="t pv" style="left:987px;letter-spacing:0.12px;top:537.7px">True</div>
<!-- grid scrollbar -->
<div class="dither" style="left:1110.500px;top:373px;width:12.500px;height:178px"></div>
<div class="btn" style="left:1110.500px;top:373px;width:12.500px;height:13.500px"></div>
<svg style="left:1114.0px;top:378.3px" width="5" height="3" viewBox="0 0 6 3.500"><path d="M0 3.500h6l-3-3.500z" fill="#111"/></svg>
<div class="btn" style="left:1110.500px;top:386.500px;width:12.500px;height:47px"></div>
<div class="btn" style="left:1110.500px;top:538px;width:12.500px;height:13px"></div>
<svg style="left:1114.0px;top:543.3px" width="5" height="3" viewBox="0 0 6 3.500"><path d="M0 0h6l-3 3.500z" fill="#111"/></svg>
<!-- description pane -->
<div style="left:906.500px;top:557px;width:222.500px;height:1.300px;background:#5e5e5e"></div><div style="left:906.500px;top:558.300px;width:222.500px;height:43.500px;background:#cbcbc9;border:1px solid;border-color:#b4b4b2 #f2f2f0 #f2f2f0 #9a9a9a"></div><div style="left:907.500px;top:560.500px;width:221.500px;height:1px;background:#b0b0ae"></div>
<div class="t b" style="left:908.2px;letter-spacing:0.30px;top:563.3px;font-size:9.9px;color:#0c0c0c">(Name)</div>
<div class="t" style="left:908.8px;letter-spacing:-0.04px;top:575.6px;color:#1a1a1a">Returns the name used in code to identify an object.</div>

<!-- form layout -->
<div class="hdr" style="left:906.500px;top:607px;width:222.500px;height:12.500px"></div>
<div class="t hdr" style="left:907.5px;letter-spacing:-0.03px;top:607.3px;background:none">Form Layout</div>
<div class="btn" style="left:1117.500px;top:607.500px;width:11px;height:11px"></div>
<svg style="left:1120px;top:609.500px" width="7" height="7" viewBox="0 0 7 7"><path d="M0.500 0.500l6 6M6.500 0.500l-6 6" stroke="#111" stroke-width="1.300"/></svg>
<div style="left:906.500px;top:621.500px;width:222.500px;height:87px;background:#fdfdfd;border-left:1.500px solid #3a3a3a;border-top:1px solid #6a6a6a"></div>
<div style="left:968.500px;top:628.500px;width:99px;height:74px;background:#cfcdc9;border:1px solid;border-color:#8a8a8a #2a2a2a #2a2a2a #8a8a8a;box-shadow:inset 1px 1px 0 #f4f4f4"></div>
<div style="left:976.500px;top:633.500px;width:84px;height:64px;background:#000;border:1px solid;border-color:#555 #f4f4f4 #f4f4f4 #555"></div>
<div style="left:993.500px;top:702.500px;width:50.500px;height:3.500px;background:#c4c2be;border:1px solid #777;border-top:none"></div>
<div style="left:986px;top:640px;width:33px;height:26px;background:#fbfbfb;border:1px solid #c8c8c8;outline:1.500px solid #222;outline-offset:-2.500px"></div>
<div style="left:988.500px;top:642.500px;width:28.500px;height:3px;background:#777"></div>
<div class="t" style="left:992.500px;top:650.500px;width:24px;overflow:hidden;font-size:10.500px;color:#1a1a1a">txtnum</div>
<!-- player control bar -->
<div style="left:211px;top:707px;width:695.500px;height:1px;background:#c8c8c6"></div><div style="left:211px;top:708px;width:918px;height:2px;background:#f0f0ee"></div><div style="left:211px;top:710px;width:918px;height:1px;background:#cdcdcb"></div>
<div style="left:151px;top:710.500px;width:978px;height:15px;background:#dbdbd9"></div>
<div style="left:151px;top:710.300px;width:978px;height:1.400px;background:#f0f0ee"></div>
<div style="left:181.300px;top:710.500px;width:1px;height:15px;background:#f4f4f2"></div>
<div style="left:209.500px;top:710.500px;width:1px;height:15px;background:#f4f4f2"></div>
<svg style="left:162.800px;top:713px" width="7" height="8" viewBox="0 0 7 8"><path d="M0 0l6.500 3.800-6.500 3.800z" fill="#585858"/></svg>
<div style="left:193.700px;top:713px;width:1.600px;height:12px;background:#4a4a4a"></div>
<div style="left:197.200px;top:713px;width:1.600px;height:12px;background:#4a4a4a"></div>
<div style="left:218px;top:713px;width:872.500px;height:12px;background:linear-gradient(#747474 0,#747474 1px,#c6c6c6 1px,#c6c6c6 2.500px,#8e8e8e 2.500px,#8e8e8e 5.700px,#c4c4c4 5.700px);border-left:1.500px solid #8a8a8a"></div><div style="left:219.500px;top:714px;width:2px;height:6px;background:#d8d8d8"></div>
<div style="left:618px;top:711px;width:13px;height:14px;background:#ededeb;border:1px solid #b4b4b4;border-bottom:none"></div>
<div style="left:620.500px;top:715.500px;width:8px;height:1px;background:#c4c4c4"></div><div style="left:620.500px;top:718px;width:8px;height:1px;background:#c4c4c4"></div>
<div style="left:1090.500px;top:713px;width:1.500px;height:7px;background:#f0f0ee"></div>
<div style="left:1097.500px;top:710.500px;width:1px;height:15px;background:#f4f4f2"></div>
<svg style="left:1109.300px;top:712.300px" width="9" height="9" viewBox="0 0 9 9"><circle cx="4.500" cy="4.500" r="4.300" fill="#505050"/><path d="M4.500 4v3.300" stroke="#eee" stroke-width="1.600"/><circle cx="4.500" cy="2.300" r=".900" fill="#eee"/></svg>

<!-- ViewletCam watermark -->
<div style="left:154.500px;top:4px;width:118px;height:30.500px;background:linear-gradient(#d6dae2 0,#dadbde 11px,#dcdcdb 13px,#d9d8d5 100%)"></div>
<svg style="left:157px;top:5.500px" width="28" height="25" viewBox="0 0 28 25"><path d="M14 .300c5.200 0 10 4.500 12.600 10.500 2.500 5.600.400 10.600-5 12.600-4.800 1.700-10.400 1.700-15.200 0-5.400-2-7.500-7-5-12.600 2.600-6 7.400-10.500 12.600-10.500z" fill="#d6badb"/><path d="M14 1.800c4.600 0 8.900 4 11.200 9.400 2.200 5 .400 9.300-4.400 11-4.300 1.500-9.300 1.500-13.600 0-4.800-1.700-6.600-6-4.400-11 2.300-5.400 6.600-9.400 11.200-9.400z" fill="#67206d"/><path d="M14 5c3.100 0 6.100 2.900 7.700 6.600 1.300 3.100.300 5.700-2.900 6.800-3.100 1-6.500 1-9.600 0-3.200-1.100-4.200-3.700-2.900-6.800 1.600-3.700 4.600-6.600 7.700-6.600z" fill="#cdaed1"/><path d="M14 5.800c2.700 0 5.400 2.600 6.800 5.900 1.100 2.700.200 4.900-2.500 5.800-2.800.900-5.800.900-8.600 0-2.700-.900-3.600-3.100-2.500-5.800 1.400-3.300 4.100-5.900 6.800-5.900z" fill="#e6d6e8"/><path d="M14 7c2.100 0 4.200 2.100 5.300 4.700.800 2 .100 3.700-1.900 4.400-2.200.700-4.600.700-6.800 0-2-.700-2.700-2.400-1.900-4.400 1.100-2.600 3.200-4.700 5.300-4.700z" fill="#f3ebf4"/><ellipse cx="13.700" cy="13" rx="3.100" ry="1.800" fill="#702376"/></svg>
<div class="t" style="left:187.3px;top:8.6px;height:18px;line-height:18px;font-size:14.7px;color:#606060;letter-spacing:.06px;-webkit-text-stroke:.25px #686868">ViewletCam</div>
<div class="t" style="left:189px;top:25px;height:6px;line-height:6px;font-size:4.7px;color:#a0a0a0">by Qarbon</div>
</div>
</body>
</html>
